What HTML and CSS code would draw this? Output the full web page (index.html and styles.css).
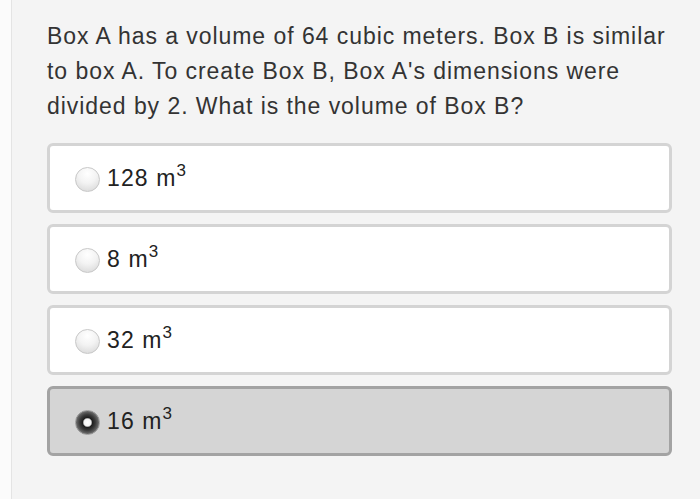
FILE: index.html
```html
<!DOCTYPE html>
<html lang="en">
<head>
  <meta charset="UTF-8">
  <meta name="viewport" content="width=device-width, initial-scale=1.0">
  <title>Question</title>
  <link rel="stylesheet" href="styles.css">
</head>
<body>
  <div class="rail"></div>

  <!-- Pregunta y opciones -->
  <div class="content">
    <p class="question">Box A has a volume of 64 cubic meters. Box B is similar to box A. To create Box B, Box A's dimensions were divided by 2. What is the volume of Box B?</p>

    <label class="option">
      <span class="radio"></span>
      <span class="answer">128 m<sup>3</sup></span>
    </label>
    <label class="option">
      <span class="radio"></span>
      <span class="answer">8 m<sup>3</sup></span>
    </label>
    <label class="option">
      <span class="radio"></span>
      <span class="answer">32 m<sup>3</sup></span>
    </label>
    <label class="option selected">
      <span class="radio"></span>
      <span class="answer">16 m<sup>3</sup></span>
    </label>
  </div>
</body>
</html>
```

FILE: styles.css
```css
body, html {
  height: 100%;
  margin: 0;
}

body {
  display: flex;
  background-color: #f4f4f4;
  font-family: "Liberation Sans", Arial, sans-serif;
  color: #333;
  overflow: hidden;
}

.rail {
  width: 11px;
  flex: none;
  background-color: #fbfbfb;
  border-right: 1px solid #e4e4e4;
}

.content {
  flex: 1;
  padding: 19px 28px 0 35px;
}

.question {
  margin: 0 0 20px 0;
  font-size: 23px;
  line-height: 34.8px;
  letter-spacing: 0.95px;
  width: 630px;
}

.option {
  display: flex;
  align-items: center;
  box-sizing: border-box;
  width: 625px;
  height: 70px;
  margin-bottom: 11px;
  padding-left: 25px;
  background-color: #fff;
  border: 3px solid #d4d4d4;
  border-radius: 6px;
}

.option.selected {
  background-color: #d5d5d5;
  border-color: #a3a3a3;
}

.radio {
  width: 23px;
  height: 23px;
  border-radius: 50%;
  border: 1px solid #c8c8c8;
  background: radial-gradient(circle at 50% 25%, #ffffff 0%, #f3f3f3 45%, #d4d4d4 100%);
  margin: 2px 7px 0 0;
  flex: none;
}

.selected .radio {
  border-color: #9a9a9a;
  background: radial-gradient(circle, #ffffff 0, #f4f4f4 3.5px, #1f1f1f 5px, #3c3c3c 8px, #6e6e6e 11.5px);
}

.answer {
  font-size: 23px;
  letter-spacing: 1.1px;
  color: #222;
}

.answer sup {
  font-size: 17px;
  line-height: 0;
  letter-spacing: 0;
  vertical-align: 10px;
}
```
